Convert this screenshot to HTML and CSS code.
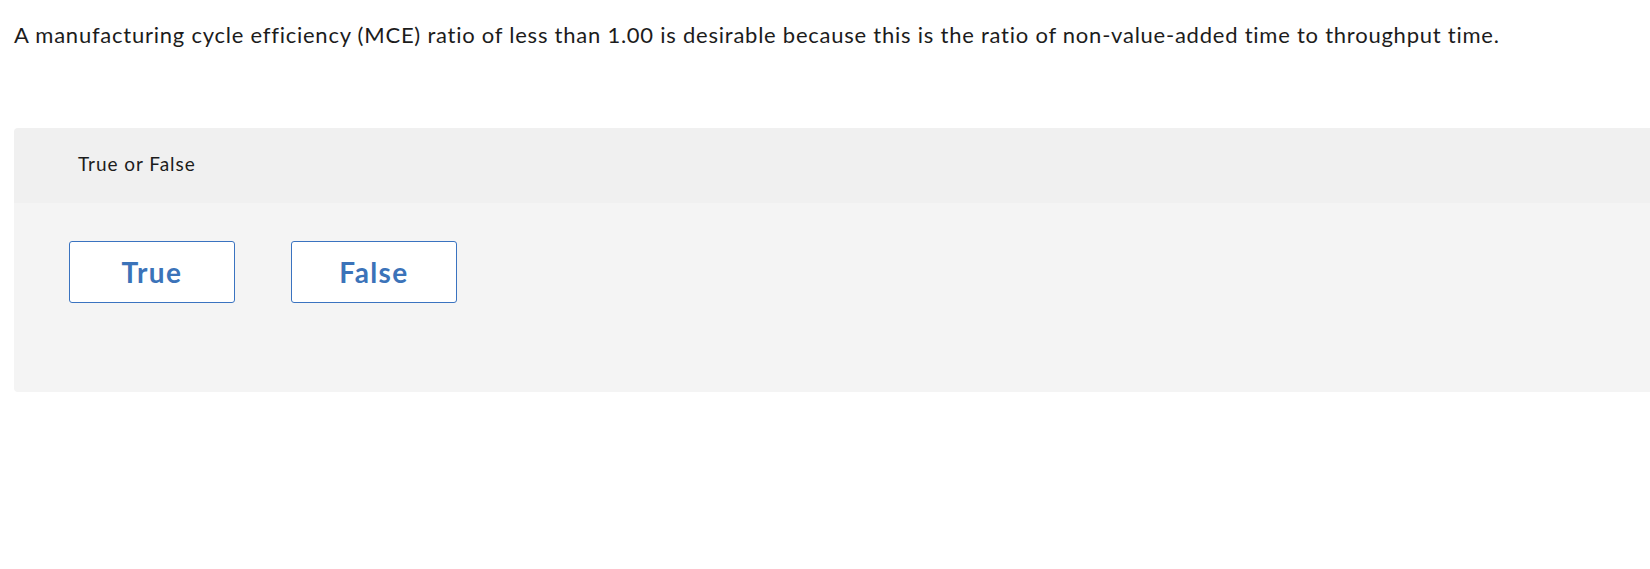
FILE: index.html
```html
<!DOCTYPE html>
<html>
<head>
<meta charset="utf-8">
<link rel="stylesheet" href="styles.css">
</head>
<body>
<div class="page">
  <p class="question">A manufacturing cycle efficiency (MCE) ratio of less than 1.00 is desirable because this is the ratio of non-value-added time to throughput time.</p>
  <div class="panel">
    <div class="panel-head">True or False</div>
    <div class="panel-body">
      <button class="choice">True</button>
      <button class="choice">False</button>
    </div>
  </div>
</div>
</body>
</html>
```
FILE: styles.css
```css
html, body {
  margin: 0;
  padding: 0;
  background: #ffffff;
  overflow: hidden;
}
.page {
  padding: 0 0 0 14px;
  font-family: Lato, "Liberation Sans", sans-serif;
  color: #1c1c1c;
}
.question {
  margin: 0;
  padding-top: 21px;
  font-size: 22px;
  line-height: 27px;
  letter-spacing: 0.76px;
  white-space: nowrap;
}
.panel {
  margin-top: 80px;
  margin-right: -20px;
  border-radius: 4px;
  overflow: hidden;
}
.panel-head {
  height: 75px;
  box-sizing: border-box;
  background: #f0f0f0;
  padding: 24px 0 0 64px;
  font-size: 19px;
  line-height: 24px;
  letter-spacing: 0.95px;
}
.panel-body {
  height: 189px;
  box-sizing: border-box;
  background: #f4f4f4;
  padding: 38px 0 0 55px;
  display: flex;
  gap: 56px;
  align-items: flex-start;
}
.choice {
  width: 166px;
  height: 62px;
  box-sizing: border-box;
  background: #ffffff;
  border: 1px solid #3a73c0;
  border-radius: 3px;
  font-family: Lato, "Liberation Sans", sans-serif;
  font-weight: 700;
  font-size: 28px;
  letter-spacing: 1.4px;
  color: #3b73b9;
  padding: 0;
  cursor: pointer;
}
```
